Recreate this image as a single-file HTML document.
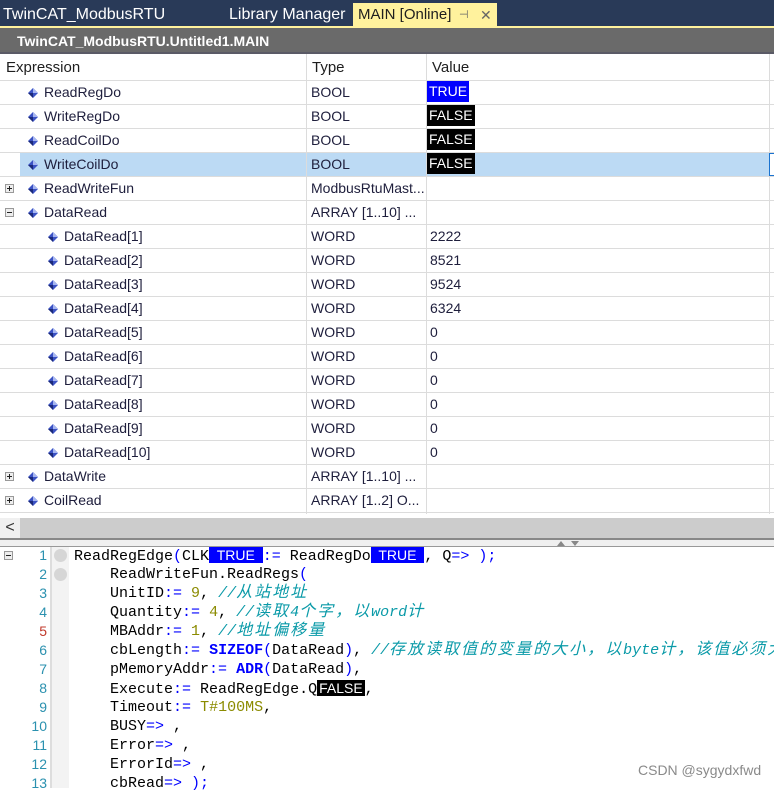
<!DOCTYPE html>
<html><head><meta charset="utf-8"><style>
*{margin:0;padding:0;box-sizing:border-box}
body{width:774px;height:788px;overflow:hidden;background:#fff;font-family:"Liberation Sans","Noto Sans CJK SC",sans-serif;position:relative}
.abs{position:absolute}
.tabbar{left:0;top:0;width:774px;height:28px;background:#293a58}
.tab{position:absolute;top:3px;height:24px;font-size:16px;color:#fff;line-height:24px;white-space:nowrap}
.act{left:353px;width:144px;background:#fff29d;color:#1e1e1e;padding-left:5px;font-size:15px}
.yline{left:0;top:26px;width:774px;height:2px;background:#fff29d}
.title{left:0;top:28px;width:774px;height:26px;background:#6a6a6a;border-bottom:2px solid #5a5a66;color:#fff;font-weight:bold;font-size:14px;line-height:26px;padding-left:17px}
.row{position:absolute;left:0;width:774px;height:24px;border-bottom:1px solid #dcdcdc;font-size:14px;color:#1e1e3c;line-height:23px}
.row span{position:absolute;top:0}
.vl{position:absolute;top:54px;width:1px;height:460px;background:#dcdcdc}
.val{position:absolute;left:427px;top:1px;height:21px;line-height:21px;color:#fff;padding:0 2px}
.code{font-family:"Liberation Mono","Noto Sans CJK SC",monospace;font-size:15px;position:absolute;left:0;width:774px;height:19px;line-height:19px;white-space:pre;color:#000}
.ln{position:absolute;left:0;width:47px;text-align:right;color:#2b91af;font-family:"Liberation Sans",sans-serif;font-size:14px}
.ct{position:absolute;left:74px}
.b{color:#00f}.c{color:#0a9aa8;font-style:italic}.n{color:#8b8b00}.k{color:#00f;font-weight:bold}
.z{font-size:16px;letter-spacing:2px}
.bx{background:#00f;color:#fff;font-family:"Liberation Sans",sans-serif;font-size:14px;padding:0 4px}
.bk{background:#000;color:#fff;font-family:"Liberation Sans",sans-serif;font-size:14px;padding:0 2px}
</style></head><body>
<div class="abs tabbar"></div>
<div class="tab" style="left:3px">TwinCAT_ModbusRTU</div>
<div class="tab" style="left:229px">Library Manager</div>
<div class="tab act">MAIN [Online]<span style="position:absolute;left:106px;top:0;font-size:11px;color:#666">⊣</span><span style="position:absolute;left:127px;top:0;font-size:14px;color:#666">✕</span></div>
<div class="abs yline"></div>
<div class="abs title">TwinCAT_ModbusRTU.Untitled1.MAIN</div>

<svg width="0" height="0" style="position:absolute"><defs>
<symbol id="d" viewBox="0 0 10 10"><path d="M5 0L10 5L5 10L0 5Z" fill="#3b52c4"/><path d="M5 0L10 5L5 5Z" fill="#a7b6f0"/><path d="M0 5L5 10L5 5Z" fill="#1c2a7a"/></symbol>
<symbol id="p" viewBox="0 0 9 9"><rect x=".5" y=".5" width="8" height="8" fill="#eee" stroke="#999"/><path d="M2 4.5H7M4.5 2V7" stroke="#222"/></symbol>
<symbol id="m" viewBox="0 0 9 9"><rect x=".5" y=".5" width="8" height="8" fill="#eee" stroke="#999"/><path d="M2 4.5H7" stroke="#222"/></symbol>
</defs></svg>

<div class="row" style="top:54px;height:27px;font-size:15px;line-height:28px;color:#1e1e1e"><span style="left:6px">Expression</span><span style="left:312px">Type</span><span style="left:432px">Value</span></div>

<div class="row" style="top:81px"><svg class="abs" style="left:28px;top:7px" width="10" height="10"><use href="#d"/></svg><span style="left:44px">ReadRegDo</span><span style="left:311px">BOOL</span><span class="val" style="background:#00f">TRUE</span></div>
<div class="row" style="top:105px"><svg class="abs" style="left:28px;top:7px" width="10" height="10"><use href="#d"/></svg><span style="left:44px">WriteRegDo</span><span style="left:311px">BOOL</span><span class="val" style="background:#000">FALSE</span></div>
<div class="row" style="top:129px"><svg class="abs" style="left:28px;top:7px" width="10" height="10"><use href="#d"/></svg><span style="left:44px">ReadCoilDo</span><span style="left:311px">BOOL</span><span class="val" style="background:#000">FALSE</span></div>
<div class="row" style="top:153px"><div class="abs" style="left:20px;top:0;width:750px;height:23px;background:#bcdaf4"></div><svg class="abs" style="left:28px;top:7px" width="10" height="10"><use href="#d"/></svg><span style="left:44px">WriteCoilDo</span><span style="left:311px">BOOL</span><span class="val" style="background:#000">FALSE</span></div>
<div class="row" style="top:177px"><svg class="abs" style="left:5px;top:7px" width="9" height="9"><use href="#p"/></svg><svg class="abs" style="left:28px;top:7px" width="10" height="10"><use href="#d"/></svg><span style="left:44px">ReadWriteFun</span><span style="left:311px">ModbusRtuMast...</span></div>
<div class="row" style="top:201px"><svg class="abs" style="left:5px;top:7px" width="9" height="9"><use href="#m"/></svg><svg class="abs" style="left:28px;top:7px" width="10" height="10"><use href="#d"/></svg><span style="left:44px">DataRead</span><span style="left:311px">ARRAY [1..10] ...</span></div>
<div class="row" style="top:225px"><svg class="abs" style="left:48px;top:7px" width="10" height="10"><use href="#d"/></svg><span style="left:64px">DataRead[1]</span><span style="left:311px">WORD</span><span style="left:430px">2222</span></div>
<div class="row" style="top:249px"><svg class="abs" style="left:48px;top:7px" width="10" height="10"><use href="#d"/></svg><span style="left:64px">DataRead[2]</span><span style="left:311px">WORD</span><span style="left:430px">8521</span></div>
<div class="row" style="top:273px"><svg class="abs" style="left:48px;top:7px" width="10" height="10"><use href="#d"/></svg><span style="left:64px">DataRead[3]</span><span style="left:311px">WORD</span><span style="left:430px">9524</span></div>
<div class="row" style="top:297px"><svg class="abs" style="left:48px;top:7px" width="10" height="10"><use href="#d"/></svg><span style="left:64px">DataRead[4]</span><span style="left:311px">WORD</span><span style="left:430px">6324</span></div>
<div class="row" style="top:321px"><svg class="abs" style="left:48px;top:7px" width="10" height="10"><use href="#d"/></svg><span style="left:64px">DataRead[5]</span><span style="left:311px">WORD</span><span style="left:430px">0</span></div>
<div class="row" style="top:345px"><svg class="abs" style="left:48px;top:7px" width="10" height="10"><use href="#d"/></svg><span style="left:64px">DataRead[6]</span><span style="left:311px">WORD</span><span style="left:430px">0</span></div>
<div class="row" style="top:369px"><svg class="abs" style="left:48px;top:7px" width="10" height="10"><use href="#d"/></svg><span style="left:64px">DataRead[7]</span><span style="left:311px">WORD</span><span style="left:430px">0</span></div>
<div class="row" style="top:393px"><svg class="abs" style="left:48px;top:7px" width="10" height="10"><use href="#d"/></svg><span style="left:64px">DataRead[8]</span><span style="left:311px">WORD</span><span style="left:430px">0</span></div>
<div class="row" style="top:417px"><svg class="abs" style="left:48px;top:7px" width="10" height="10"><use href="#d"/></svg><span style="left:64px">DataRead[9]</span><span style="left:311px">WORD</span><span style="left:430px">0</span></div>
<div class="row" style="top:441px"><svg class="abs" style="left:48px;top:7px" width="10" height="10"><use href="#d"/></svg><span style="left:64px">DataRead[10]</span><span style="left:311px">WORD</span><span style="left:430px">0</span></div>
<div class="row" style="top:465px"><svg class="abs" style="left:5px;top:7px" width="9" height="9"><use href="#p"/></svg><svg class="abs" style="left:28px;top:7px" width="10" height="10"><use href="#d"/></svg><span style="left:44px">DataWrite</span><span style="left:311px">ARRAY [1..10] ...</span></div>
<div class="row" style="top:489px"><svg class="abs" style="left:5px;top:7px" width="9" height="9"><use href="#p"/></svg><svg class="abs" style="left:28px;top:7px" width="10" height="10"><use href="#d"/></svg><span style="left:44px">CoilRead</span><span style="left:311px">ARRAY [1..2] O...</span></div>
<div class="vl" style="left:306px"></div><div class="vl" style="left:426px"></div><div class="vl" style="left:769px"></div>
<div class="abs" style="left:769px;top:153px;width:5px;height:23px;border:1px solid #1a73d0;border-right:none"></div>

<div class="abs" style="left:0;top:518px;width:774px;height:20px;background:#cccccc"></div>
<div class="abs" style="left:0;top:518px;width:20px;height:20px;background:#f0f0f0;font-size:16px;line-height:20px;text-align:center;color:#333">&lt;</div>
<div class="abs" style="left:0;top:538px;width:774px;height:9px;background:#f0f0f0;border-top:2px solid #888;border-bottom:1px solid #999"></div>
<svg class="abs" style="left:555px;top:540px" width="30" height="7"><path d="M2 6L6 1L10 6Z" fill="#888"/><path d="M16 1L24 1L20 6Z" fill="#888"/></svg>

<div class="abs" style="left:50px;top:547px;width:2px;height:241px;background:#ddd"></div>
<div class="abs" style="left:52px;top:547px;width:17px;height:241px;background:#f3f3f3"></div>
<svg class="abs" style="left:4px;top:551px" width="9" height="9"><use href="#m"/></svg>
<div class="abs" style="left:54px;top:549px;width:13px;height:13px;border-radius:50%;background:#d6d6d6"></div>
<div class="abs" style="left:54px;top:568px;width:13px;height:13px;border-radius:50%;background:#d6d6d6"></div>

<div class="code" style="top:546px"><span class="ln">1</span><span class="ct">ReadRegEdge<span class="b">(</span>CLK<span class="bx"> TRUE </span><span class="b">:=</span> ReadRegDo<span class="bx"> TRUE </span>, Q<span class="b">=&gt;</span> <span class="b">);</span></span></div>
<div class="code" style="top:565px"><span class="ln">2</span><span class="ct">    ReadWriteFun.ReadRegs<span class="b">(</span></span></div>
<div class="code" style="top:584px"><span class="ln">3</span><span class="ct">    UnitID<span class="b">:=</span> <span class="n">9</span>, <span class="c">//<span class="z">从站地址</span></span></span></div>
<div class="code" style="top:603px"><span class="ln">4</span><span class="ct">    Quantity<span class="b">:=</span> <span class="n">4</span>, <span class="c">//<span class="z">读取</span>4<span class="z">个字，以</span>word<span class="z">计</span></span></span></div>
<div class="code" style="top:622px"><span class="ln" style="color:#c0392b">5</span><span class="ct">    MBAddr<span class="b">:=</span> <span class="n">1</span>, <span class="c">//<span class="z">地址偏移量</span></span></span></div>
<div class="code" style="top:641px"><span class="ln">6</span><span class="ct">    cbLength<span class="b">:=</span> <span class="k">SIZEOF</span><span class="b">(</span>DataRead<span class="b">)</span>, <span class="c">//<span class="z">存放读取值的变量的大小，以</span>byte<span class="z">计，该值必须大于</span></span></span></div>
<div class="code" style="top:660px"><span class="ln">7</span><span class="ct">    pMemoryAddr<span class="b">:=</span> <span class="k">ADR</span><span class="b">(</span>DataRead<span class="b">)</span>,</span></div>
<div class="code" style="top:679px"><span class="ln">8</span><span class="ct">    Execute<span class="b">:=</span> ReadRegEdge.Q<span class="bk">FALSE</span>,</span></div>
<div class="code" style="top:698px"><span class="ln">9</span><span class="ct">    Timeout<span class="b">:=</span> <span class="n">T#100MS</span>,</span></div>
<div class="code" style="top:717px"><span class="ln">10</span><span class="ct">    BUSY<span class="b">=&gt;</span> ,</span></div>
<div class="code" style="top:736px"><span class="ln">11</span><span class="ct">    Error<span class="b">=&gt;</span> ,</span></div>
<div class="code" style="top:755px"><span class="ln">12</span><span class="ct">    ErrorId<span class="b">=&gt;</span> ,</span></div>
<div class="code" style="top:774px"><span class="ln">13</span><span class="ct">    cbRead<span class="b">=&gt;</span> <span class="b">);</span></span></div>
<div class="abs" style="left:638px;top:762px;font-size:14px;color:#8a8a8a;background:rgba(255,255,255,.6)">CSDN @sygydxfwd</div>
</body></html>
